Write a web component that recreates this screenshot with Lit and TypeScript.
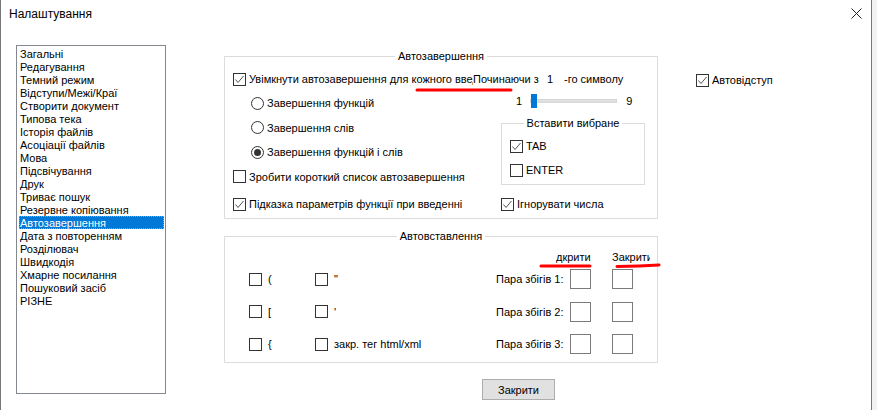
import { LitElement, html, svg, css } from "lit";
import { customElement } from "lit/decorators.js";

const ITEMS = ["Загальні","Редагування","Темний режим","Відступи/Межі/Краї","Створити документ","Типова тека","Історія файлів","Асоціації файлів","Мова","Підсвічування","Друк","Триває пошук","Резервне копіювання","Автозавершення","Дата з повторенням","Розділювач","Швидкодія","Хмарне посилання","Пошуковий засіб","РІЗНЕ"];

const check = (label: string, on = false, extra = "") => html`<div class="opt ${extra}">
  <svg class="box" width="13" height="13" viewBox="0 0 13 13"><rect x=".5" y=".5" width="12" height="12" fill="#fff" stroke="#333"/>${on ? svg`<path d="M2.5 6.5 5 9.5 10.5 3" fill="none" stroke="#555"/>` : ""}</svg>
  <span class="lbl">${label}</span></div>`;

const radio = (label: string, on = false) => html`<div class="opt radio">
  <svg class="box" width="13" height="13" viewBox="0 0 13 13"><circle cx="6.500" cy="6.500" r="6" fill="#fff" stroke="#333"/>${on ? svg`<circle cx="6.500" cy="6.500" r="3.500" fill="#333"/>` : ""}</svg>
  <span class="lbl">${label}</span></div>`;

const pair = (first: string, second: string, n: number) => html`<div class="pair">
  <div class="c1">${check(first)}</div>
  <div class="c2">${check(second)}</div>
  <span class="plabel">Пара збігів ${n}:</span>
  <span class="field"></span><span class="field"></span></div>`;

@customElement("app-root")
export class AppRoot extends LitElement {
  static styles = css`
    :host { display: block; position: relative; width: 877px; height: 410px; overflow: hidden; font: 11px/16px "Liberation Sans", Arial, sans-serif; color: #000; background: linear-gradient(90deg, #cfcfcf, #f2f2f2); }
    .window { width: 872px; height: 410px; box-sizing: border-box; background: #fff; border-left: 1px solid #777; border-right: 1px solid #777; }
    .title { height: 28px; display: flex; align-items: center; justify-content: space-between; padding: 0 9px 0 8px; font-size: 12px; }
    .close { margin-bottom: 2px; }
    .body { display: flex; align-items: flex-start; padding: 17px 0 0 15px; }
    .list { width: 150px; height: 349px; box-sizing: border-box; border: 1px solid #828790; padding: 1px 1px 0; flex: none; }
    .item { height: 13px; line-height: 14px; padding-left: 2px; white-space: nowrap; }
    .item.sel { background: #0078d7; color: #fff; outline: 1px dotted #fb8a28; outline-offset: -1px; margin: 0 0 0 1px; padding-left: 1px; }
    .main { margin-left: 58px; padding-top: 4px; display: flex; flex-direction: column; }
    .top { display: flex; align-items: flex-start; }
    fieldset { margin: 0; min-width: 0; box-sizing: border-box; border: 1px solid #dcdcdc; }
    legend { margin: 0 auto; padding: 0 3px; line-height: 15px; white-space: nowrap; }
    .g1 { width: 434px; height: 170px; padding: 3px 8px 0; }
    .g1grid { display: grid; grid-template-columns: 268px 1fr; grid-template-rows: 24px 24px 25px 24px 25px 30px; }
    .rowA { grid-column: 1 / 3; display: flex; align-items: center; white-space: nowrap; }
    .rowA .opt { width: 240px; flex: none; overflow: hidden; }
    .from { width: 74px; flex: none; }
    .num { width: 17px; flex: none; }
    .right { grid-column: 2; grid-row: 2 / 6; display: flex; flex-direction: column; }
    .opt { display: flex; align-items: center; gap: 3px; white-space: nowrap; }
    .box { flex: none; }
    .radio { padding-left: 18px; gap: 3px; }
    .slider { display: flex; align-items: center; height: 14px; margin-top: 3px; padding-left: 15px; }
    .track { width: 87px; height: 4px; margin: 0 9px 0 8px; background: #e0e0e0; border: 1px solid #d6d6d6; box-sizing: border-box; display: flex; align-items: center; flex: none; }
    .thumb { width: 6px; height: 14px; background: #0078d7; flex: none; }
    .g3 { width: 144px; height: 69px; margin-top: 8px; padding: 3px 8px 0; }
    .g3 .opt { height: 24px; }
    .auto { margin: 23px 0 0 38px; }
    .g2 { width: 434px; height: 134px; margin-top: 10px; padding: 5px 24px 0; }
    .heads { display: flex; height: 16px; padding-left: 307px; margin-bottom: 4px; }
    .heads span { white-space: nowrap; overflow: hidden; }
    .h1 { width: 56px; flex: none; }
    .h2 { width: 38px; flex: none; }
    .pairs { display: flex; flex-direction: column; gap: 12.5px; }
    .pair { display: flex; align-items: center; height: 20px; }
    .c1 { width: 66px; flex: none; }
    .c1 .opt { gap: 6px; }
    .c2 { width: 181px; flex: none; }
    .c2 .opt { gap: 6px; }
    .plabel { width: 68px; flex: none; white-space: nowrap; }
    .field { width: 21px; height: 20px; box-sizing: border-box; border: 1px solid #7a7a7a; flex: none; margin-left: 6px; }
    .field + .field { margin-left: 21px; }
    .btn { width: 73px; height: 21px; box-sizing: border-box; margin: 16px 0 0 258px; background: #e1e1e1; border: 1px solid #adadad; display: flex; align-items: center; justify-content: center; }
    .marks { position: absolute; inset: 0; pointer-events: none; }
  `;

  render() {
    return html`<div class="window">
      <div class="title"><span>Налаштування</span>
        <svg class="close" width="11" height="11" viewBox="0 0 11 11"><path d="M.5.5l10 10M10.500.5l-10 10" stroke="#222" fill="none"/></svg>
      </div>
      <div class="body">
        <div class="list">${ITEMS.map((t) => html`<div class="item ${t === "Автозавершення" ? "sel" : ""}">${t}</div>`)}</div>
        <div class="main">
          <div class="top">
            <fieldset class="g1"><legend>Автозавершення</legend>
              <div class="g1grid">
                <div class="rowA">${check("Увімкнути автозавершення для кожного введеного", true)}
                  <span class="from">Починаючи з</span><span class="num">1</span><span>-го символу</span></div>
                ${radio("Завершення функцій")}
                <div class="right">
                  <div class="slider"><span>1</span><div class="track"><div class="thumb"></div></div><span>9</span></div>
                  <fieldset class="g3"><legend>Вставити вибране</legend>${check("TAB", true)}${check("ENTER")}</fieldset>
                </div>
                ${radio("Завершення слів")}
                ${radio("Завершення функцій і слів", true)}
                ${check("Зробити короткий список автозавершення")}
                ${check("Підказка параметрів функції при введенні", true)}
                ${check("Ігнорувати числа", true)}
              </div>
            </fieldset>
            ${check("Автовідступ", true, "auto")}
          </div>
          <fieldset class="g2"><legend>Автовставлення</legend>
            <div class="heads"><span class="h1">дкрити</span><span class="h2">Закрити</span></div>
            <div class="pairs">
              ${pair("(", '"', 1)}${pair("[", "'", 2)}${pair("{", "закр. тег html/xml", 3)}
            </div>
          </fieldset>
          <div class="btn">Закрити</div>
        </div>
      </div>
    </div>
    <svg class="marks" width="877" height="410" viewBox="0 0 877 410">
      <path d="M417 90H511M541 266H590M617 266.500Q640 266 659 265" stroke="#f00" stroke-width="3" fill="none" stroke-linecap="round"/>
    </svg>`;
  }
}
